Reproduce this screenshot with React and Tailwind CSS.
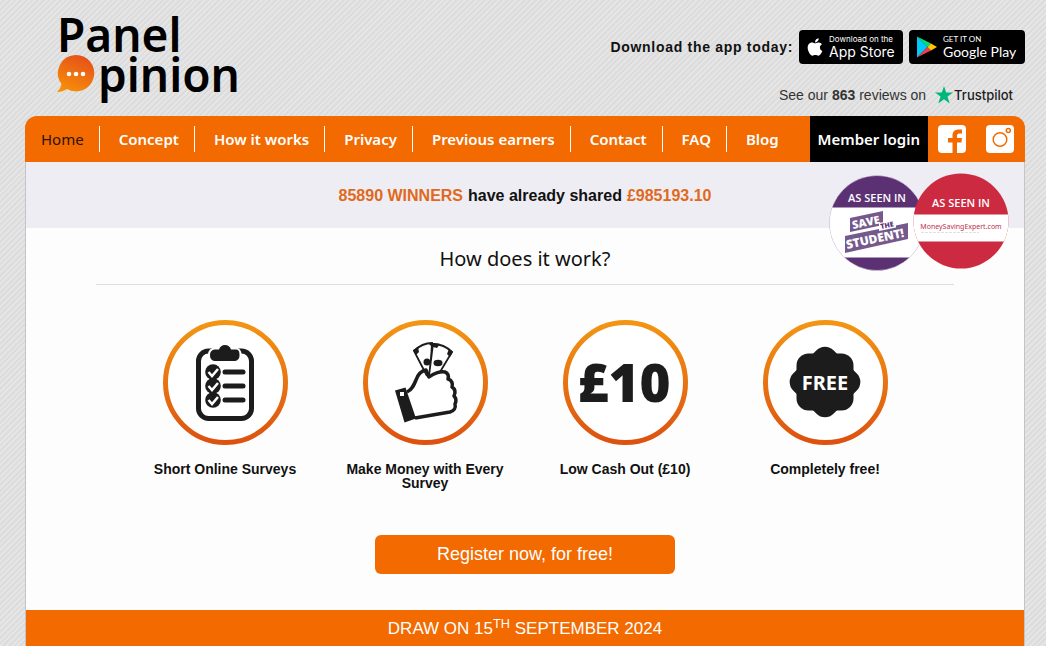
import React from "react"
import clsx from "clsx"
import { FaApple } from "react-icons/fa"

const NAV_LINKS = [
  "Home",
  "Concept",
  "How it works",
  "Privacy",
  "Previous earners",
  "Contact",
  "FAQ",
  "Blog",
]

function SpeechBubble() {
  return (
    <svg viewBox="0 0 38 40" className="h-10 w-[38px]" aria-hidden="true">
      <defs>
        <linearGradient id="bubble" x1="0.7" y1="0" x2="0.3" y2="1">
          <stop offset="0" stopColor="#e5501a" />
          <stop offset="1" stopColor="#f78f08" />
        </linearGradient>
      </defs>
      <path
        d="M19 1a18.200 18.200 0 1 1-9 34c-3 2-6 3-10 3 2-2 4-5 4.500-8A18.200 18.200 0 0 1 19 1z"
        fill="url(#bubble)"
      />
      <circle cx="12" cy="20" r="2.300" fill="#fff" />
      <circle cx="19" cy="20" r="2.300" fill="#fff" />
      <circle cx="26" cy="20" r="2.300" fill="#fff" />
    </svg>
  )
}

function Logo() {
  return (
    <a
      href="#home"
      aria-label="Panel Opinion"
      className="flex flex-col font-['Noto_Sans'] text-[46px] leading-10 font-semibold text-black"
    >
      <span>Panel</span>
      <span className="flex items-center gap-[3px]">
        <SpeechBubble />
        <span>pinion</span>
      </span>
    </a>
  )
}

function PlayIcon() {
  return (
    <svg viewBox="0 0 20 22" className="h-[22px] w-5" aria-hidden="true">
      <path d="M0 0.500v21L10.500 11z" fill="#00c8f8" />
      <path d="M0 0.500L10.500 11l3.500-3.500z" fill="#00e07a" />
      <path d="M0 21.500L10.500 11l3.500 3.500z" fill="#f23b50" />
      <path d="M14 7.500L20 11l-6 3.500L10.500 11z" fill="#ffc800" />
    </svg>
  )
}

function StoreButton({ icon, small, name, className }) {
  return (
    <a
      href="#app"
      className={clsx(
        "flex h-[34px] items-center rounded bg-black text-white",
        className
      )}
    >
      {icon}
      <span className="flex flex-col whitespace-nowrap">
        <span className="text-[8px] leading-[10px]">{small}</span>
        <span className="text-sm leading-4">{name}</span>
      </span>
    </a>
  )
}

function FacebookIcon() {
  return (
    <svg viewBox="0 0 28 28" className="size-7" aria-hidden="true">
      <rect width="28" height="28" rx="4" fill="#fff" />
      <path
        d="M14.500 28V17.500H10v-4.500h4.500v-2.500c0-4 2.500-6 6-6H24v4h-2.500c-2 0-2.500 1-2.500 2.500v2h5l-.6 4.500H19V28z"
        fill="#f26a00"
      />
    </svg>
  )
}

function InstagramIcon() {
  return (
    <svg viewBox="0 0 28 28" className="size-7" aria-hidden="true">
      <rect width="28" height="28" rx="4" fill="#fff" />
      <g fill="none" stroke="#f26a00" strokeWidth="1.500">
        <circle cx="14" cy="14.500" r="6.800" />
        <circle cx="22.300" cy="5.500" r="2" />
      </g>
    </svg>
  )
}

function StudentBadge() {
  return (
    <svg viewBox="0 0 96 96" className="size-24" role="img">
      <defs>
        <clipPath id="student">
          <circle cx="48" cy="48" r="47.500" />
        </clipPath>
      </defs>
      <g clipPath="url(#student)">
        <rect width="96" height="96" fill="#5c3173" />
        <rect y="32.500" width="96" height="50" fill="#fff" />
      </g>
      <circle cx="48" cy="48" r="47.500" fill="none" stroke="#e6e2ec" strokeWidth="0.500" />
      <text x="48" y="27" textAnchor="middle" fontSize="11" fontWeight="600" fontFamily="Open Sans, sans-serif" fill="#fff">
        AS SEEN IN
      </text>
      <path d="M21 43l33-7v14l-33 7z" fill="#75588c" />
      <path d="M16 61l63-13v16L16 78z" fill="#75588c" />
      <path d="M50 48l17-3.500v8L50 56z" fill="#fff" />
      <g fontFamily="Open Sans, sans-serif" fontWeight="800">
        <text transform="translate(24 54) rotate(-12)" fontSize="11" fill="#fff">SAVE</text>
        <text transform="translate(52 54) rotate(-12)" fontSize="7" fill="#5c3173">THE</text>
        <text transform="translate(18 74) rotate(-12)" fontSize="12" fill="#fff">STUDENT!</text>
      </g>
    </svg>
  )
}

function MoneyBadge() {
  return (
    <svg viewBox="0 0 96 96" className="size-24" role="img">
      <defs>
        <clipPath id="money">
          <circle cx="48" cy="48" r="47.500" />
        </clipPath>
      </defs>
      <g clipPath="url(#money)">
        <rect width="96" height="96" fill="#cc2a40" />
        <rect y="41.500" width="96" height="27" fill="#fff" />
      </g>
      <text x="48" y="34" textAnchor="middle" fontSize="11" fontWeight="600" fontFamily="Open Sans, sans-serif" fill="#fff">
        AS SEEN IN
      </text>
      <text x="48" y="56" textAnchor="middle" fontSize="7" fontFamily="Noto Sans, sans-serif" fill="#c0304c">
        MoneySavingExpert.com
      </text>
      <path d="M8 59.500h58" stroke="#e0e0e0" strokeDasharray="3 1" />
    </svg>
  )
}

function Ring({ id, children }) {
  return (
    <svg viewBox="0 0 125 125" className="size-[125px]" aria-hidden="true">
      <defs>
        <linearGradient id={id} x1="0" y1="0" x2="0" y2="1">
          <stop offset="0" stopColor="#f39512" />
          <stop offset="1" stopColor="#dc5210" />
        </linearGradient>
      </defs>
      <circle cx="62.500" cy="62.500" r="60" fill="#fff" stroke={`url(#${id})`} strokeWidth="5" />
      {children}
    </svg>
  )
}

function SurveyIcon() {
  return (
    <Ring id="ring-survey">
      <rect x="35.500" y="31" width="53" height="67.500" rx="10" fill="none" stroke="#1c1c1c" strokeWidth="5" />
      <path
        d="M53 29.500h3c1-3 3-4.500 6-4.500s5 1.500 6 4.500h4c4 0 4.500 2 4.500 5.500 0 4-2 6-6 6H53c-4 0-6-2-6-6 0-3.500 2-5.500 6-5.500z"
        fill="#1c1c1c"
        stroke="#fff"
        strokeWidth="4"
        paintOrder="stroke"
      />
      {[52, 66, 80].map((y) => (
        <g key={y}>
          <circle cx="50" cy={y} r="7.800" fill="#1c1c1c" />
          <path d={`M45.500 ${y}l3.500 4 6-7`} fill="none" stroke="#fff" strokeWidth="2.500" />
          <path d={`M62 ${y}h18`} stroke="#1c1c1c" strokeWidth="5" strokeLinecap="round" />
        </g>
      ))}
    </Ring>
  )
}

function MoneyIcon() {
  return (
    <Ring id="ring-money">
      <g fill="none" stroke="#1c1c1c" strokeWidth="1.800">
        <path d="M64 56L51 31c5-5 11-8 18-8l-2 33" fill="#fff" />
        <path d="M66 56l4-32c7 0 14 3 19 8L77 52" fill="#fff" />
      </g>
      <g fill="#1c1c1c">
        <path d="M50 30l5-3 1 5-3 3zM65 23h5l-1 4zM70 23l7 1-3 4-4-1zM90 32l-4-3-2 5 3 3z" />
        <circle cx="64" cy="42" r="3.500" />
        <ellipse cx="75" cy="43" rx="4.500" ry="3.200" />
        <path d="M32 70.500l10.500-3 10.500 31-11.500 4z" />
      </g>
      <rect x="37" y="72" width="4" height="4" fill="#fff" />
      <path
        d="M44 72c5-2 7-7 9-12 2-6 5-9 10-10l3 7c5-4 12-6 16-5 3 1 4 4 3 7 4 1 5 5 4 8 3 2 4 5 2 9 3 3 2 6 1 8 1 4-1 7-5 8L52 98"
        fill="none"
        stroke="#1c1c1c"
        strokeWidth="3.500"
        strokeLinejoin="round"
      />
    </Ring>
  )
}

function CashIcon() {
  return (
    <Ring id="ring-cash">
      <text x="61" y="82" textAnchor="middle" fontSize="53" fontWeight="800" fontFamily="Open Sans, sans-serif" fill="#1c1c1c">
        £10
      </text>
    </Ring>
  )
}

function FreeIcon() {
  return (
    <Ring id="ring-free">
      <g fill="#1c1c1c">
        <rect x="33.500" y="33.500" width="57" height="57" rx="12" />
        <rect x="33.500" y="33.500" width="57" height="57" rx="12" transform="rotate(45 62 62)" />
      </g>
      <text x="62" y="70" textAnchor="middle" fontSize="20" fontWeight="700" fontFamily="Noto Sans, sans-serif" fill="#fff">
        FREE
      </text>
    </Ring>
  )
}

const FEATURES = [
  { icon: <SurveyIcon />, label: "Short Online Surveys" },
  { icon: <MoneyIcon />, label: "Make Money with Every Survey" },
  { icon: <CashIcon />, label: "Low Cash Out (£10)" },
  { icon: <FreeIcon />, label: "Completely free!" },
]

function Header() {
  return (
    <header className="flex h-[116px] items-start justify-between pt-[14px] pl-8">
      <Logo />
      <div className="flex flex-col items-end gap-[21px] pt-4">
        <div className="flex items-center gap-[6px]">
          <span className="text-sm font-bold tracking-wider whitespace-nowrap">
            Download the app today:
          </span>
          <StoreButton
            icon={<FaApple className="size-5" />}
            small="Download on the"
            name="App Store"
            className="w-[104px] gap-1 pl-[6px] font-['Inter']"
          />
          <StoreButton
            icon={<PlayIcon />}
            small="GET IT ON"
            name="Google Play"
            className="w-[116px] gap-[6px] pl-2 font-['Lato']"
          />
        </div>
        <div className="flex items-center pr-3 text-sm text-[#333333]">
          <span>
            See our <b>863</b> reviews on
          </span>
          <a href="#trustpilot" className="ml-2 flex items-center text-[#1c1c1c]">
            <svg viewBox="0 0 20 20" className="size-5" aria-hidden="true">
              <path d="M10 1l2.200 6.500H19l-5.500 4.100 2.200 6.900L10 14.300l-5.700 4.200 2.200-6.900L1 7.500h6.800z" fill="#00b67a" />
            </svg>
            <span className="font-['Inter'] text-[13px] font-medium">Trustpilot</span>
          </a>
        </div>
      </div>
    </header>
  )
}

function NavBar() {
  return (
    <nav className="flex h-[46px] items-center overflow-hidden rounded-t-xl bg-[#f26a00] font-['Noto_Sans'] text-[15px] font-semibold whitespace-nowrap text-white">
      {NAV_LINKS.map((link, index) => (
        <a
          key={link}
          href="#nav"
          className={clsx(
            "pr-[15px] leading-[26px]",
            index === 0 ? "pl-4 font-normal text-[#2b1408]" : "pl-[19px]",
            index < NAV_LINKS.length - 1 && "border-r border-white"
          )}
        >
          {link}
        </a>
      ))}
      <a
        href="#login"
        className="ml-auto flex h-full items-center bg-black px-2"
      >
        Member login
      </a>
      <a href="#facebook" aria-label="Facebook" className="ml-[10px]">
        <FacebookIcon />
      </a>
      <a href="#instagram" aria-label="Instagram" className="mr-[11px] ml-5">
        <InstagramIcon />
      </a>
    </nav>
  )
}

export default function App() {
  return (
    <div className="min-h-screen bg-[repeating-linear-gradient(135deg,#e5e5e5_0px,#e5e5e5_2px,#dcdcdc_2px,#dcdcdc_4px)] pr-[21px] pl-[25px] font-['Liberation_Sans',sans-serif] text-[#111111]">
      <Header />
      <NavBar />
      <main className="relative border-x border-[#c4c4c8] bg-[#fdfdfd]">
        <p className="flex h-[66px] items-center justify-center gap-[5px] bg-[#eeedf4] pt-[2px] text-base font-bold">
          <span className="text-[#e0691c]">85890 WINNERS</span>
          <span>have already shared</span>
          <span className="text-[#e0691c]">£985193.10</span>
        </p>
        <div className="absolute top-[11px] right-[15px] flex">
          <div className="-mr-3 pt-[2px]">
            <StudentBadge />
          </div>
          <MoneyBadge />
        </div>

        <h2 className="mx-[70px] border-b border-[#dddddd] pt-[17px] pb-[11px] text-center font-['Noto_Sans'] text-xl">
          How does it work?
        </h2>
        <ul className="grid grid-cols-4 px-[99px] pt-[35px]">
          {FEATURES.map(({ icon, label }) => (
            <li
              key={label}
              className="flex flex-col items-center gap-[17px] px-5 text-center text-sm leading-[14px] font-bold"
            >
              {icon}
              {label}
            </li>
          ))}
        </ul>
        <div className="flex justify-center pt-[45px] pb-9">
          <button
            type="button"
            className="h-[39px] w-[300px] cursor-pointer rounded-md bg-[#f26a00] pb-[2px] text-lg text-white"
          >
            Register now, for free!
          </button>
        </div>
        <p className="bg-[#f26a00] pt-[7px] pb-[5px] text-center text-[17px] leading-6 text-white">
          DRAW ON 15<sup>TH</sup> SEPTEMBER 2024
        </p>
      </main>
    </div>
  )
}
